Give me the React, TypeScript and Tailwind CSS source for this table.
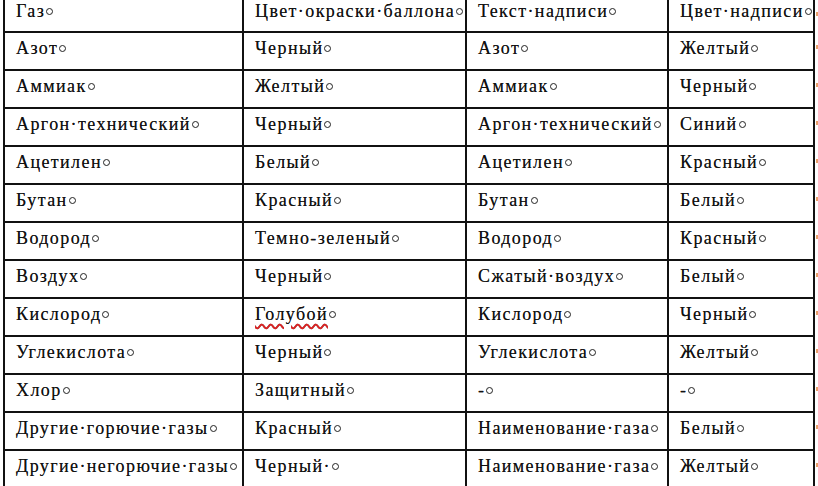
import React from "react"

type Cell = { text: string; wavy?: boolean; gap?: boolean }

const header = ["Газ", "Цвет окраски баллона", "Текст надписи", "Цвет надписи"]

const rows: Cell[][] = [
  [{ text: "Азот" }, { text: "Черный" }, { text: "Азот" }, { text: "Желтый" }],
  [{ text: "Аммиак" }, { text: "Желтый" }, { text: "Аммиак" }, { text: "Черный" }],
  [{ text: "Аргон технический" }, { text: "Черный" }, { text: "Аргон технический" }, { text: "Синий" }],
  [{ text: "Ацетилен" }, { text: "Белый" }, { text: "Ацетилен" }, { text: "Красный" }],
  [{ text: "Бутан" }, { text: "Красный" }, { text: "Бутан" }, { text: "Белый" }],
  [{ text: "Водород" }, { text: "Темно-зеленый" }, { text: "Водород" }, { text: "Красный" }],
  [{ text: "Воздух" }, { text: "Черный" }, { text: "Сжатый воздух" }, { text: "Белый" }],
  [{ text: "Кислород" }, { text: "Голубой", wavy: true }, { text: "Кислород" }, { text: "Черный" }],
  [{ text: "Углекислота" }, { text: "Черный" }, { text: "Углекислота" }, { text: "Желтый" }],
  [{ text: "Хлор" }, { text: "Защитный" }, { text: "-" }, { text: "-" }],
  [{ text: "Другие горючие газы" }, { text: "Красный" }, { text: "Наименование газа" }, { text: "Белый" }],
  [{ text: "Другие негорючие газы" }, { text: "Черный", gap: true }, { text: "Наименование газа" }, { text: "Желтый" }],
]

const widths = ["w-[239px]", "w-[223px]", "w-[202px]", "w-[146px]"]

// Word's end-of-cell mark
function CellMark() {
  return <span className="inline-block w-[7px] h-[7px] rounded-full border border-[#222] ml-[1px] align-middle mb-[2px]" />
}

function CellText({ cell }: { cell: Cell }) {
  const shown = cell.text.replace(/ /g, "·")
  return (
    <span className="whitespace-nowrap">
      <span className={cell.wavy ? "underline decoration-wavy decoration-[#d22] underline-offset-[3px]" : ""}>
        {shown}
      </span>
      {cell.gap && "·"}
      <CellMark />
    </span>
  )
}

function Row({ cells, first }: { cells: Cell[]; first?: boolean }) {
  return (
    <div className="flex">
      <div className="flex border-l-2 border-[#111]">
        {cells.map((c, i) => (
          <div
            key={i}
            className={`${widths[i]} shrink-0 border-r-2 border-b-2 border-[#111] pl-[11px] ${first ? "h-[33px] pt-[1px]" : "h-[38px] pt-[5px]"}`}
          >
            <CellText cell={c} />
          </div>
        ))}
      </div>
      <div className="w-[3px] shrink-0 relative bg-white">
        <span className="absolute left-[1px] top-[12px] w-[2px] h-[4px] bg-[#e9a06a]" />
      </div>
    </div>
  )
}

export default function App() {
  return (
    <div className="w-[818px] h-[486px] overflow-hidden bg-white text-[#111] text-[18px] leading-[20px] tracking-[1.4px] pl-[3px] font-['Liberation_Serif','Times_New_Roman',serif] [text-shadow:0_0_0.6px_rgba(0,0,0,0.6)]">
      <Row first cells={header.map((t) => ({ text: t }))} />
      {rows.map((r, i) => (
        <Row key={i} cells={r} />
      ))}
    </div>
  )
}
